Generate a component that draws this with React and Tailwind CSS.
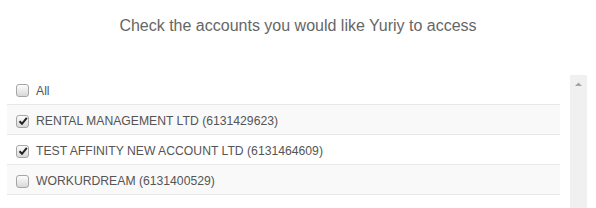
import React from 'react';

const accounts = [
  { label: 'All', checked: false },
  { label: 'RENTAL MANAGEMENT LTD (6131429623)', checked: true },
  { label: 'TEST AFFINITY NEW ACCOUNT LTD (6131464609)', checked: true },
  { label: 'WORKURDREAM (6131400529)', checked: false },
];

const Box = ({ checked }) => (
  <span className="w-[13px] h-[13px] shrink-0 rounded-[3px] border border-[#a6a6a6] bg-gradient-to-b from-[#fdfdfd] to-[#d8d8d8] flex items-center justify-center">
    {checked && (
      <svg width="10" height="10" viewBox="0 0 10 10">
        <path d="M1.5 5.2 L4 7.8 L8.8 1.8" fill="none" stroke="#222" strokeWidth="2" />
      </svg>
    )}
  </span>
);

export default function App() {
  return (
    <div className="w-[596px] h-[208px] bg-white overflow-hidden text-[#555]" style={{ fontFamily: '"Liberation Sans", Arial, sans-serif' }}>
      <div className="pt-[16px] text-center text-[16px] leading-[20px] text-[#666]">
        Check the accounts you would like Yuriy to access
      </div>
      <div className="flex mt-[38px]">
        <div className="ml-[7px] w-[553px]">
          {accounts.map((a, i) => (
            <div
              key={a.label}
              className={`h-[30px] flex items-center gap-[7px] pl-[9px] pt-[3px] text-[12.2px] ${i > 0 ? 'border-t border-[#e8e8e8]' : ''} ${i % 2 === 1 ? 'bg-[#f9f9f9]' : ''}`}
            >
              <Box checked={a.checked} />
              <span className="pt-[1px]">{a.label}</span>
            </div>
          ))}
          <div className="border-t border-[#e8e8e8]" />
        </div>
        <div className="ml-[10px] mt-[1px] w-[17px] h-[140px] bg-[#f0f0f0] flex justify-center pt-[7px]">
          <svg width="7" height="5" viewBox="0 0 7 5">
            <path d="M0 4 L3.5 0.5 L7 4 Z" fill="#a3a3a3" />
          </svg>
        </div>
      </div>
    </div>
  );
}
